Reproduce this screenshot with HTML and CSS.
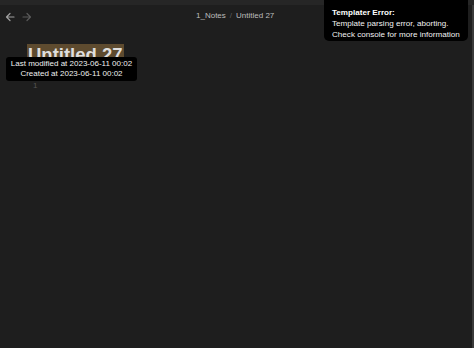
FILE: index.html
```html
<!DOCTYPE html>
<html>
<head>
<meta charset="utf-8">
<link rel="stylesheet" href="styles.css">
</head>
<body>
<div class="app">
  <div class="topstrip"></div>
  <div class="main">
    <div class="header">
      <div class="nav">
        <svg class="arrow back" width="10" height="10" viewBox="0 0 10 10"><path d="M9 5H1.5M5 1.5L1.5 5L5 8.5" fill="none" stroke="currentColor" stroke-width="1.2" stroke-linecap="round" stroke-linejoin="round"/></svg>
        <svg class="arrow fwd" width="10" height="10" viewBox="0 0 10 10"><path d="M1 5H8.5M5 1.5L8.5 5L5 8.5" fill="none" stroke="currentColor" stroke-width="1.2" stroke-linecap="round" stroke-linejoin="round"/></svg>
      </div>
      <div class="crumbs"><span>1_Notes</span><span class="sep">/</span><span>Untitled 27</span></div>
    </div>
    <div class="doc">
      <div class="title"><span class="hl">Untitled 27</span></div>
      <div class="line"><span class="lnum">1</span></div>
    </div>
  </div>
  <div class="scroll"></div>
</div>
<div class="tooltip">Last modified at 2023-06-11 00:02<br>Created at 2023-06-11 00:02</div>
<div class="notice"><b>Templater Error:</b><br>Template parsing error, aborting.<br>Check console for more information</div>
</body>
</html>
```
FILE: styles.css
```css
html, body { margin: 0; padding: 0; }
body {
  width: 474px; height: 348px; overflow: hidden;
  background: #1e1e1e;
  font-family: "Liberation Sans", Arial, sans-serif;
  position: relative;
}
.app { display: flex; height: 348px; }
.main { flex: 1; display: flex; flex-direction: column; }
.topstrip { position: absolute; left: 0; top: 0; width: 474px; height: 5px; background: #262626; }
.header { height: 34px; display: flex; align-items: center; position: relative; }
.nav { display: flex; gap: 7px; padding-left: 5px; align-items: center; }
.arrow { display: block; }
.back { color: #a0a0a0; }
.fwd { color: #5a5a5a; }
.crumbs { position: absolute; left: 196px; top: 11px; font-size: 8px; color: #bdbdbd; display: flex; gap: 4px; white-space: nowrap; }
.sep { color: #5e5e5e; }
.doc { padding-left: 27px; }
.title { margin-top: 10px; height: 22px; line-height: 22px; }
.hl { background: #5e4b2f; color: #dedede; font-size: 18.5px; font-weight: 700; padding: 0 1px; display: inline-block; }
.line { margin-top: 15px; padding-left: 6px; font-size: 8px; color: #555; }
.scroll { width: 2px; background: #3a3a3a; height: 348px; }
.tooltip {
  position: absolute; left: 6px; top: 57px; width: 131px; height: 24px;
  background: #000; color: #f0f0f0; border-radius: 3px; white-space: nowrap;
  font-size: 8px; line-height: 9.5px; text-align: center; padding-top: 2px; box-sizing: border-box;
}
.notice {
  position: absolute; left: 324px; top: -6px; width: 144px; height: 47px;
  background: #000; color: #f2f2f2; border-radius: 5px; white-space: nowrap;
  font-size: 8.1px; line-height: 11px; padding: 13px 0 0 8px; box-sizing: border-box;
}
.notice b { font-weight: 700; color: #fff; }
```
